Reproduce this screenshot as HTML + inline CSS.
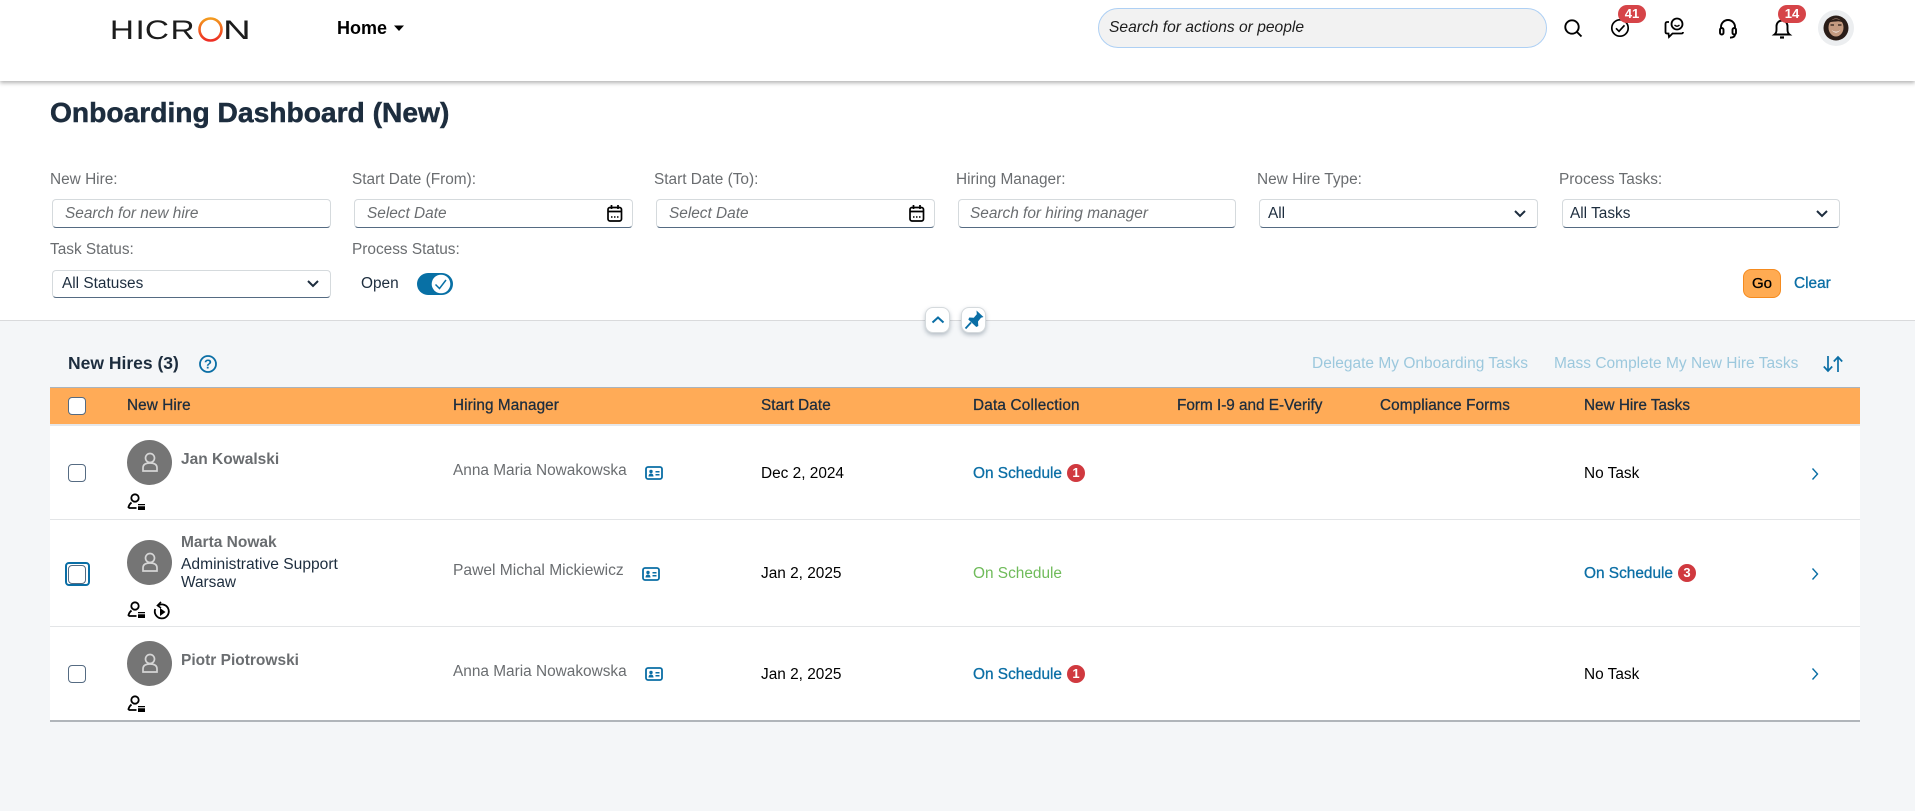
<!DOCTYPE html>
<html lang="en"><head><meta charset="utf-8"><title>Onboarding Dashboard (New)</title>
<style>
html,body{margin:0;padding:0;width:1915px;height:811px;overflow:hidden;background:#f4f6f8;font-family:"Liberation Sans",sans-serif;font-size:15.4px;color:#000}
.a,.t,svg.i{position:absolute}
.t{line-height:20px;white-space:nowrap}
.lbl{color:#6a6d70}
.ph{color:#6a6d70;font-style:italic}
.in{position:absolute;box-sizing:border-box;height:29px;background:#fff;border:1px solid #d5dadd;border-bottom:1.5px solid #556b82;border-radius:4px}
.th{font-size:15.3px;color:#1d2d3e;-webkit-text-stroke:.3px #1d2d3e;letter-spacing:.1px}
.nm{font-weight:bold;color:#6a6d70;font-size:15.5px}
.lk{color:#0a6ea5;-webkit-text-stroke:.3px #0a6ea5}
.dis{color:#9cc8dd;font-size:15.5px}
.b{position:absolute;width:18px;height:18px;border-radius:9px;background:#d0393f;color:#fff;font-size:13px;font-weight:bold;line-height:18px;text-align:center}
.nb{position:absolute;height:18px;width:28px;border-radius:9px;background:#d64448;color:#fff;font-size:13px;font-weight:bold;line-height:18px;text-align:center}
.cb{position:absolute;box-sizing:border-box;width:18px;height:18px;border:1px solid #556b82;border-radius:4px;background:#fff}
.av{position:absolute;width:45px;height:45px;border-radius:50%;background:#757575}
.rl{position:absolute;left:50px;width:1810px;height:1px;background:#e3e5e7}
.sb{position:absolute;width:25px;height:26px;box-sizing:border-box;background:#fff;border:1px solid #d5dadd;border-radius:8px;box-shadow:0 2px 4px rgba(60,80,100,.35)}
</style></head><body>

<!-- white top area -->
<div class="a" style="left:0;top:0;width:1915px;height:320px;background:#fff;border-bottom:1px solid #d9dadc"></div>
<div class="a" style="left:0;top:0;width:1915px;height:81px;background:#fff;box-shadow:0 2px 4px rgba(0,0,0,.3)"></div>

<!-- logo -->
<svg class="i" style="left:100px;top:10px" width="170" height="40" viewBox="0 0 170 40">
<defs><linearGradient id="g" x1="0" y1="0" x2="0" y2="1"><stop offset="0" stop-color="#f39a1e"/><stop offset="1" stop-color="#ee2d24"/></linearGradient></defs>
<g font-family="Liberation Sans" font-size="26.5" fill="#1c1c1c">
<text transform="scale(1.26 1)" x="7.8 28.2 35.6 56" y="29">HICR</text>
<text transform="translate(123 0) scale(1.45 1)" x="0" y="29">N</text>
</g>
<circle cx="110.500" cy="19.500" r="11" fill="none" stroke="url(#g)" stroke-width="2.600"/>
</svg>
<div class="t" style="left:337px;top:18px;font-size:18px;font-weight:bold">Home</div>
<svg class="i" style="left:393px;top:25px" width="12" height="7"><path d="M1 .5h10L6 6z" fill="#000"/></svg>

<!-- search -->
<div class="a" style="left:1098px;top:8px;width:449px;height:40px;box-sizing:border-box;background:#f2f2f2;border:1px solid #aed0f4;border-radius:20px"></div>
<div class="t" style="left:1109px;top:18px;font-size:15.6px;font-style:italic;color:#1d1d1d">Search for actions or people</div>

<svg class="i" style="left:1561px;top:16px" width="24" height="24" fill="none" stroke="#000" stroke-width="1.900"><circle cx="11" cy="11" r="6.700"/><path d="M16 16l4.500 4.500"/></svg>
<svg class="i" style="left:1608px;top:16px" width="24" height="24" fill="none" stroke="#000" stroke-width="1.700"><circle cx="12" cy="12" r="8.200"/><path d="M8 12.300l3 3 5.500-6"/></svg>
<svg class="i" style="left:1662px;top:16px" width="24" height="24" fill="none" stroke="#000" stroke-width="1.800"><path d="M7 6H5Q3.500 6 3.500 8v8q0 1.500 1.500 1.500h1.500L7 21l3.500-3.500h9q1.500 0 1.500-1.500"/><circle cx="15" cy="8" r="5.500"/><path d="M12.500 9q2.500 2.500 5 0" stroke-width="1.300"/></svg>
<svg class="i" style="left:1716px;top:16px" width="24" height="24" fill="none" stroke="#000" stroke-width="1.900"><path d="M5 13V11a7 7 0 0 1 14 0v2"/><rect x="4" y="12" width="3.500" height="6.500" rx="1.700"/><rect x="16.500" y="12" width="3.500" height="6.500" rx="1.700"/><path d="M19 18.500q0 3-5 3.200"/></svg>
<svg class="i" style="left:1770px;top:16px" width="24" height="24" fill="none" stroke="#000" stroke-width="1.900"><path d="M4.500 18.500q2-1.500 2-5V10a5.500 5.500 0 0 1 11 0v3.500q0 3.500 2 5z"/><path d="M10 21.500h4" stroke-width="2.200"/></svg>
<div class="nb" style="left:1618px;top:5px">41</div>
<div class="nb" style="left:1778px;top:5px">14</div>
<svg class="i" style="left:1818px;top:10px" width="36" height="36"><circle cx="18" cy="18" r="18" fill="#eceef0"/><circle cx="18" cy="18" r="12.500" fill="#2a1d18"/><ellipse cx="18" cy="17.500" rx="7.500" ry="9" fill="#c49a80"/><path d="M10 13q8-8 16 0-4-2.500-8-1.500-5 0-8 1.500z" fill="#2a1d18"/><path d="M12.500 15h3.500M20 15h3.500" stroke="#2a1d18" stroke-width="1.200"/><path d="M13.500 20q4.500 3.500 9 0-4.500 5-9 0z" fill="#fff"/></svg>

<!-- title -->
<div class="t" style="left:50px;top:96px;font-size:28.2px;line-height:32px;font-weight:bold;color:#1d2d3e;-webkit-text-stroke:.5px #1d2d3e">Onboarding Dashboard (New)</div>

<!-- filter labels -->
<div class="t lbl" style="left:50px;top:170px">New Hire:</div>
<div class="t lbl" style="left:352px;top:170px">Start Date (From):</div>
<div class="t lbl" style="left:654px;top:170px">Start Date (To):</div>
<div class="t lbl" style="left:956px;top:170px">Hiring Manager:</div>
<div class="t lbl" style="left:1257px;top:170px">New Hire Type:</div>
<div class="t lbl" style="left:1559px;top:170px">Process Tasks:</div>
<div class="t lbl" style="left:50px;top:240px">Task Status:</div>
<div class="t lbl" style="left:352px;top:240px">Process Status:</div>

<!-- inputs -->
<div class="in" style="left:52px;top:199px;width:279px"></div>
<div class="in" style="left:354px;top:199px;width:279px"></div>
<div class="in" style="left:656px;top:199px;width:279px"></div>
<div class="in" style="left:958px;top:199px;width:278px"></div>
<div class="in" style="left:1259px;top:199px;width:279px"></div>
<div class="in" style="left:1562px;top:199px;width:278px"></div>
<div class="in" style="left:52px;top:270px;width:279px;height:28px"></div>
<div class="t ph" style="left:65px;top:203.500px">Search for new hire</div>
<div class="t ph" style="left:367px;top:203.500px">Select Date</div>
<div class="t ph" style="left:669px;top:203.500px">Select Date</div>
<div class="t ph" style="left:970px;top:203.500px">Search for hiring manager</div>
<div class="t" style="left:1268px;top:203.500px;color:#1d2d3e">All</div>
<div class="t" style="left:1570px;top:203.500px;color:#1d2d3e">All Tasks</div>
<div class="t" style="left:62px;top:274px;color:#1d2d3e">All Statuses</div>

<svg class="i" style="left:606px;top:204px" width="18" height="19" fill="none" stroke="#000" stroke-width="1.700"><rect x="2" y="3.500" width="13.500" height="13.500" rx="2"/><path d="M2 7.500h13.500M5.500 1v4M12 1v4"/><path d="M5 13h1.500M8 13h1.500M11 13h1.500" stroke-width="1.500"/></svg>
<svg class="i" style="left:908px;top:204px" width="18" height="19" fill="none" stroke="#000" stroke-width="1.700"><rect x="2" y="3.500" width="13.500" height="13.500" rx="2"/><path d="M2 7.500h13.500M5.500 1v4M12 1v4"/><path d="M5 13h1.500M8 13h1.500M11 13h1.500" stroke-width="1.500"/></svg>
<svg class="i" style="left:1513px;top:209px" width="14" height="10" fill="none" stroke="#1d2d3e" stroke-width="2"><path d="M2 2l5 5 5-5"/></svg>
<svg class="i" style="left:1815px;top:209px" width="14" height="10" fill="none" stroke="#1d2d3e" stroke-width="2"><path d="M2 2l5 5 5-5"/></svg>
<svg class="i" style="left:306px;top:279px" width="14" height="10" fill="none" stroke="#1d2d3e" stroke-width="2"><path d="M2 2l5 5 5-5"/></svg>

<div class="t" style="left:361px;top:274px;color:#1d2d3e">Open</div>
<svg class="i" style="left:417px;top:273px" width="36" height="22"><rect width="36" height="22" rx="11" fill="#0870a5"/><circle cx="24" cy="11" r="9.300" fill="#fff"/><path d="M18.500 11.500l4 4 6.500-8.500" fill="none" stroke="#0870a5" stroke-width="1.500"/></svg>

<div class="a" style="left:1743px;top:269px;width:38px;height:29px;box-sizing:border-box;background:#ffab52;border:1px solid #f58b1f;border-radius:8px;text-align:center;line-height:27px;font-size:15px;-webkit-text-stroke:.3px #000">Go</div>
<div class="t lk" style="left:1794px;top:274px">Clear</div>

<!-- collapse buttons -->
<div class="sb" style="left:925px;top:307px"></div>
<div class="sb" style="left:961px;top:307px"></div>
<svg class="i" style="left:930px;top:312px" width="16" height="16" fill="none" stroke="#0a6ea5" stroke-width="2"><path d="M2.500 10.500l5.500-5 5.500 5"/></svg>
<svg class="i" style="left:964px;top:310px" width="20" height="20"><path d="M12.500 .5l7 6.500-2.500.8-3 3.700.3 4.500-2 1-8-7.500 1-2 4.500.2 3-3.500z" fill="#0a6ea5"/><path d="M7 12.500L1.500 18.500" stroke="#0a6ea5" stroke-width="1.800"/></svg>

<!-- list heading -->
<div class="t" style="left:68px;top:353px;font-size:17.500px;font-weight:bold;color:#1d2d3e">New Hires (3)</div>
<svg class="i" style="left:198px;top:354px" width="20" height="20"><circle cx="10" cy="10" r="8" fill="none" stroke="#0a6ea5" stroke-width="1.800"/><text x="10" y="14.500" text-anchor="middle" font-family="Liberation Sans" font-size="13" font-weight="bold" fill="#0a6ea5">?</text></svg>
<div class="t dis" style="left:1312px;top:354px">Delegate My Onboarding Tasks</div>
<div class="t dis" style="left:1554px;top:354px">Mass Complete My New Hire Tasks</div>
<svg class="i" style="left:1822px;top:354px" width="22" height="20" fill="none" stroke="#0a6ea5" stroke-width="1.700"><path d="M6 2v15M1.800 12.500L6 17l4.200-4.500M16 18V3M11.800 7.500L16 3l4.200 4.500"/></svg>

<!-- table -->
<div class="a" style="left:50px;top:387px;width:1810px;height:37px;background:#ffab57;border-top:1px solid #a9b4be;box-sizing:border-box"></div>
<div class="a" style="left:50px;top:424px;width:1810px;height:296px;background:#fff;border-top:2px solid #e5e7ea;box-sizing:border-box"></div>
<div class="rl" style="top:519px"></div>
<div class="rl" style="top:626px"></div>
<div class="a" style="left:50px;top:720px;width:1810px;height:1.500px;background:#b0b5ba"></div>

<div class="cb" style="left:68px;top:397px"></div>
<div class="t th" style="left:127px;top:396px">New Hire</div>
<div class="t th" style="left:453px;top:396px">Hiring Manager</div>
<div class="t th" style="left:761px;top:396px">Start Date</div>
<div class="t th" style="left:973px;top:396px;letter-spacing:.2px">Data Collection</div>
<div class="t th" style="left:1177px;top:396px;letter-spacing:0">Form I-9 and E-Verify</div>
<div class="t th" style="left:1380px;top:396px;letter-spacing:.1px">Compliance Forms</div>
<div class="t th" style="left:1584px;top:396px;letter-spacing:0">New Hire Tasks</div>

<!-- checkboxes -->
<div class="cb" style="left:68px;top:464px"></div>
<div class="cb" style="left:68px;top:565px;height:19px"></div>
<div class="a" style="left:65px;top:562px;width:25px;height:24px;box-sizing:border-box;border:2px solid #0a6ea5;border-radius:4px"></div>
<div class="cb" style="left:68px;top:665px"></div>

<!-- avatars -->
<div class="av" style="left:127px;top:440px"></div>
<div class="av" style="left:127px;top:540px"></div>
<div class="av" style="left:127px;top:641px"></div>
<svg class="i" style="left:138px;top:450px" width="24" height="26" fill="none" stroke="#d5d5d5" stroke-width="1.700"><circle cx="12" cy="8" r="4.500"/><path d="M5 21v-3q0-5 7-5t7 5v3z"/></svg>
<svg class="i" style="left:138px;top:550px" width="24" height="26" fill="none" stroke="#d5d5d5" stroke-width="1.700"><circle cx="12" cy="8" r="4.500"/><path d="M5 21v-3q0-5 7-5t7 5v3z"/></svg>
<svg class="i" style="left:138px;top:651px" width="24" height="26" fill="none" stroke="#d5d5d5" stroke-width="1.700"><circle cx="12" cy="8" r="4.500"/><path d="M5 21v-3q0-5 7-5t7 5v3z"/></svg>

<!-- names -->
<div class="t nm" style="left:181px;top:450px">Jan Kowalski</div>
<div class="t nm" style="left:181px;top:533px">Marta Nowak</div>
<div class="t" style="left:181px;top:555px;color:#1d2d3e;font-size:15.6px">Administrative Support</div>
<div class="t" style="left:181px;top:573px;color:#1d2d3e">Warsaw</div>
<div class="t nm" style="left:181px;top:651px">Piotr Piotrowski</div>

<!-- small person icons -->
<svg class="i" style="left:126px;top:493px" width="20" height="20"><circle cx="9" cy="5" r="3.700" fill="none" stroke="#000" stroke-width="1.800"/><path d="M2.500 15q0-3 3-5.500M2.500 15h8" fill="none" stroke="#000" stroke-width="1.800"/><path d="M12 11h7v1.300h-7zM12 13.300h7V17h-7z" fill="#000"/></svg>
<svg class="i" style="left:126px;top:601px" width="20" height="20"><circle cx="9" cy="5" r="3.700" fill="none" stroke="#000" stroke-width="1.800"/><path d="M2.500 15q0-3 3-5.500M2.500 15h8" fill="none" stroke="#000" stroke-width="1.800"/><path d="M12 11h7v1.300h-7zM12 13.300h7V17h-7z" fill="#000"/></svg>
<svg class="i" style="left:126px;top:695px" width="20" height="20"><circle cx="9" cy="5" r="3.700" fill="none" stroke="#000" stroke-width="1.800"/><path d="M2.500 15q0-3 3-5.500M2.500 15h8" fill="none" stroke="#000" stroke-width="1.800"/><path d="M12 11h7v1.300h-7zM12 13.300h7V17h-7z" fill="#000"/></svg>
<svg class="i" style="left:152px;top:601px" width="20" height="20" fill="none" stroke="#000" stroke-width="1.800"><path d="M6 4.500a7 7 0 1 1-2.800 3.500"/><path d="M9 1L5.500 4.500 9 7" stroke-width="1.600"/><path d="M8 7l5.500 4L8 15z" fill="#000" stroke="none"/></svg>

<!-- hiring managers -->
<div class="t lbl" style="left:453px;top:461px">Anna Maria Nowakowska</div>
<div class="t lbl" style="left:453px;top:561px;font-size:15.6px">Pawel Michal Mickiewicz</div>
<div class="t lbl" style="left:453px;top:662px">Anna Maria Nowakowska</div>
<svg class="i" style="left:645px;top:466px" width="18" height="14"><rect x="1" y="1" width="16" height="12" rx="2" fill="none" stroke="#0a6ea5" stroke-width="1.800"/><circle cx="6" cy="5.500" r="1.700" fill="#0a6ea5"/><path d="M3.500 10.500q0-3 2.500-3t2.500 3zM10.500 5h4v1.500h-4zM10.500 8h4v1.500h-4z" fill="#0a6ea5"/></svg>
<svg class="i" style="left:642px;top:567px" width="18" height="14"><rect x="1" y="1" width="16" height="12" rx="2" fill="none" stroke="#0a6ea5" stroke-width="1.800"/><circle cx="6" cy="5.500" r="1.700" fill="#0a6ea5"/><path d="M3.500 10.500q0-3 2.500-3t2.500 3zM10.500 5h4v1.500h-4zM10.500 8h4v1.500h-4z" fill="#0a6ea5"/></svg>
<svg class="i" style="left:645px;top:667px" width="18" height="14"><rect x="1" y="1" width="16" height="12" rx="2" fill="none" stroke="#0a6ea5" stroke-width="1.800"/><circle cx="6" cy="5.500" r="1.700" fill="#0a6ea5"/><path d="M3.500 10.500q0-3 2.500-3t2.500 3zM10.500 5h4v1.500h-4zM10.500 8h4v1.500h-4z" fill="#0a6ea5"/></svg>

<!-- dates -->
<div class="t" style="left:761px;top:463.500px">Dec 2, 2024</div>
<div class="t" style="left:761px;top:563.500px">Jan 2, 2025</div>
<div class="t" style="left:761px;top:665px">Jan 2, 2025</div>

<!-- data collection -->
<div class="t lk" style="left:973px;top:463.500px">On Schedule</div>
<div class="b" style="left:1067px;top:464px">1</div>
<div class="t" style="left:973px;top:563.500px;color:#6fbb5a">On Schedule</div>
<div class="t lk" style="left:973px;top:665px">On Schedule</div>
<div class="b" style="left:1067px;top:665px">1</div>

<!-- tasks -->
<div class="t" style="left:1584px;top:463.500px">No Task</div>
<div class="t lk" style="left:1584px;top:564px">On Schedule</div>
<div class="b" style="left:1678px;top:564px">3</div>
<div class="t" style="left:1584px;top:665px">No Task</div>

<svg class="i" style="left:1809px;top:467px" width="12" height="14" fill="none" stroke="#0a6ea5" stroke-width="1.400"><path d="M3.500 1.500l5 5.500-5 5.500"/></svg>
<svg class="i" style="left:1809px;top:567px" width="12" height="14" fill="none" stroke="#0a6ea5" stroke-width="1.400"><path d="M3.500 1.500l5 5.500-5 5.500"/></svg>
<svg class="i" style="left:1809px;top:667px" width="12" height="14" fill="none" stroke="#0a6ea5" stroke-width="1.400"><path d="M3.500 1.500l5 5.500-5 5.500"/></svg>

</body></html>
